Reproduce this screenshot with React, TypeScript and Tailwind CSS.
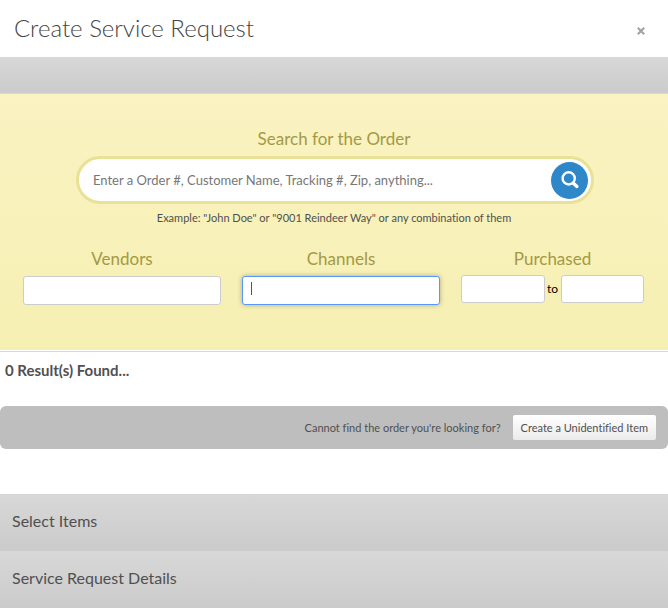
import React from "react";

const fieldClass =
  "block w-full min-w-0 rounded-[3px] border border-[#cccccc] bg-white px-2 text-[13px] text-[#555555] outline-none";
const labelClass = "text-center text-[17px] leading-6 text-[#a39a45]";

function SectionBar({ title }: { title: string }) {
  return (
    <h2>
      <button
        type="button"
        className="block h-[57px] w-full bg-linear-to-b from-[#d8d8d8] to-[#cbcbcb] px-3 pb-1 text-left text-[16px] leading-6 text-[#505050]"
      >
        {title}
      </button>
    </h2>
  );
}

function SearchIcon() {
  return (
    <svg viewBox="0 0 20 20" className="h-5 w-5" fill="none" stroke="#ffffff" aria-hidden="true">
      <circle cx="8.7" cy="8.4" r="6.1" strokeWidth="2.4" />
      <path d="M13.4 13.2 L16.9 16.4" strokeWidth="3.4" strokeLinecap="round" />
    </svg>
  );
}

export default function App() {
  return (
    <main className="bg-white font-['Lato','Open_Sans',sans-serif] text-[#505050] [font-variant-ligatures:none]">
      <header className="flex h-[57px] items-center justify-between pr-[21px] pl-[14px]">
        <h1 className="pb-[2px] text-[24px] leading-8 font-light text-[#444444]">Create Service Request</h1>
        <button type="button" aria-label="Close" className="mt-1 flex h-4 w-3 items-center justify-center">
          <svg viewBox="0 0 8 8" className="h-2 w-2" stroke="#a3a3a3" strokeWidth="2.2" aria-hidden="true">
            <path d="M0.8 0.8 L7.2 7.2 M7.2 0.8 L0.8 7.2" />
          </svg>
        </button>
      </header>

      <div className="h-9 bg-linear-to-b from-[#d8d8d8] to-[#cbcbcb]" />

      <form
        className="border-t border-[#e6df94] bg-linear-to-b from-[#faf3c2] to-[#f6efb2] pt-[33px] pb-[45px]"
        onSubmit={(event) => event.preventDefault()}
      >
        <label htmlFor="order-search" className={`block ${labelClass}`}>
          Search for the Order
        </label>
        <div className="mt-[5px] mr-[74px] ml-[76px] flex h-12 items-center rounded-full border-3 border-[#e8e197] bg-white pr-[3px] pl-[14px]">
          <input
            id="order-search"
            type="text"
            placeholder="Enter a Order #, Customer Name, Tracking #, Zip, anything..."
            className="h-9 min-w-0 flex-1 bg-transparent text-[13px] outline-none placeholder:text-[#777777]"
          />
          <button
            type="submit"
            aria-label="Search"
            className="flex h-[37px] w-[37px] shrink-0 items-center justify-center rounded-full bg-[#2d87c8]"
          >
            <SearchIcon />
          </button>
        </div>
        <p className="mt-1 text-center text-[11px] leading-5 text-[#505050]">
          Example: "John Doe" or "9001 Reindeer Way" or any combination of them
        </p>

        <div className="mt-[19px] grid grid-cols-[198fr_198fr_183fr] gap-[21px] pr-6 pl-[23px]">
          <div>
            <label htmlFor="vendors" className={`block ${labelClass}`}>
              Vendors
            </label>
            <input id="vendors" type="text" className={`mt-[5px] h-[29px] ${fieldClass}`} />
          </div>
          <div>
            <label htmlFor="channels" className={`block ${labelClass}`}>
              Channels
            </label>
            <div className="relative mt-[5px]">
              <input
                id="channels"
                type="text"
                className="block h-[29px] w-full min-w-0 rounded-[3px] border border-[#5897fb] bg-white px-2 text-[13px] shadow-[0_0_5px_rgba(0,0,0,0.3)] outline-none"
              />
              <span className="absolute top-[6px] left-[9px] h-[13px] w-px bg-[#555555]" />
            </div>
          </div>
          <fieldset className="min-w-0">
            <legend className={`w-full ${labelClass}`}>Purchased</legend>
            <div className="mt-1 flex items-center">
              <input type="text" aria-label="Purchased from" className={`h-7 flex-1 ${fieldClass}`} />
              <span className="w-4 shrink-0 text-center text-[12px] leading-4 text-black">to</span>
              <input type="text" aria-label="Purchased to" className={`h-7 flex-1 ${fieldClass}`} />
            </div>
          </fieldset>
        </div>
      </form>

      <section className="mt-px border-t border-[#e0dcae] pt-2 pb-[45px]">
        <p className="px-[5px] text-[15px] leading-5 font-bold text-[#505050]">0 Result(s) Found...</p>
        <div className="mt-[26px] flex h-[43px] items-center justify-end gap-3 rounded-[6px] bg-[#bebebe] px-3">
          <span className="text-[11px] leading-4">Cannot find the order you're looking for?</span>
          <button
            type="button"
            className="h-[25px] rounded-[2px] bg-linear-to-b from-white to-[#ebebeb] px-2 text-[11px] leading-4"
          >
            Create a Unidentified Item
          </button>
        </div>
      </section>

      <SectionBar title="Select Items" />
      <SectionBar title="Service Request Details" />
    </main>
  );
}
